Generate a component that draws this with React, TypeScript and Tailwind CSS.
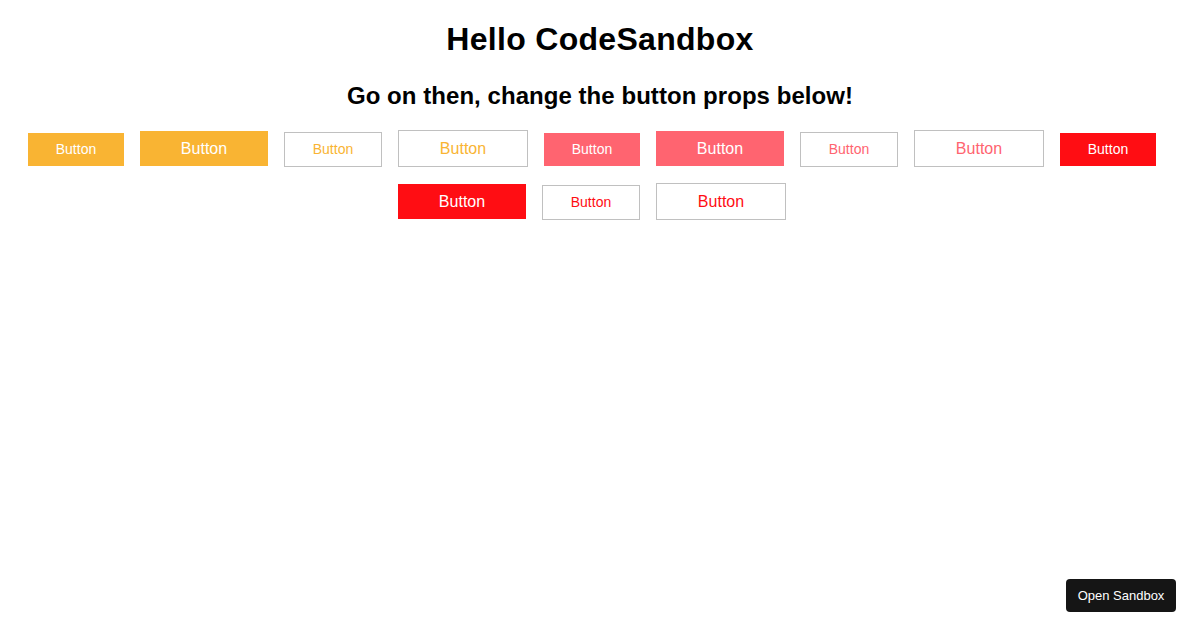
import React from 'react';

type Variant = 'filled' | 'outline';
type Size = 'small' | 'large';

interface ButtonSpec {
  variant: Variant;
  size: Size;
  color: 'orange' | 'pink' | 'red';
}

const buttons: ButtonSpec[] = [
  { variant: 'filled', size: 'small', color: 'orange' },
  { variant: 'filled', size: 'large', color: 'orange' },
  { variant: 'outline', size: 'small', color: 'orange' },
  { variant: 'outline', size: 'large', color: 'orange' },
  { variant: 'filled', size: 'small', color: 'pink' },
  { variant: 'filled', size: 'large', color: 'pink' },
  { variant: 'outline', size: 'small', color: 'pink' },
  { variant: 'outline', size: 'large', color: 'pink' },
  { variant: 'filled', size: 'small', color: 'red' },
  { variant: 'filled', size: 'large', color: 'red' },
  { variant: 'outline', size: 'small', color: 'red' },
  { variant: 'outline', size: 'large', color: 'red' },
];

const fills = {
  orange: 'bg-[#f9b433]',
  pink: 'bg-[#ff6470]',
  red: 'bg-[#ff0d13]',
};

const texts = {
  orange: 'text-[#f9b433]',
  pink: 'text-[#ff6470]',
  red: 'text-[#ff0d13]',
};

const sizes = {
  filled: {
    small: 'w-[96px] h-[33px] text-[14px] leading-[33px]',
    large: 'w-[128px] h-[35px] text-[16px] leading-[35px]',
  },
  outline: {
    small: 'w-[98px] h-[35px] text-[14px] leading-[33px]',
    large: 'w-[130px] h-[37px] text-[16px] leading-[35px]',
  },
};

const DemoButton: React.FC<ButtonSpec> = ({ variant, size, color }) => {
  const look =
    variant === 'filled'
      ? `${fills[color]} text-white`
      : `bg-white border border-[#c0c0c0] ${texts[color]}`;
  return (
    <button className={`${look} ${sizes[variant][size]} mr-4 mb-4 text-center cursor-pointer`}>
      Button
    </button>
  );
};

export default function App() {
  return (
    <div className="min-h-screen bg-white text-black text-center font-['Liberation_Sans',Arial,sans-serif]">
      <h1 className="text-[32px] font-bold leading-[37px] tracking-[0.3px] pt-[21px] mb-[24px]">Hello CodeSandbox</h1>
      <h2 className="text-[24px] font-bold leading-[28px] tracking-[0.05px] mb-[20px]">Go on then, change the button props below!</h2>
      <div className="flex flex-wrap justify-center items-baseline">
        {buttons.map((b, i) => (
          <DemoButton key={i} {...b} />
        ))}
      </div>
      <button className="fixed right-[24px] bottom-[18px] w-[110px] h-[33px] rounded-[4px] bg-[#151515] text-[13px] text-white leading-[33px]">
        Open Sandbox
      </button>
    </div>
  );
}
